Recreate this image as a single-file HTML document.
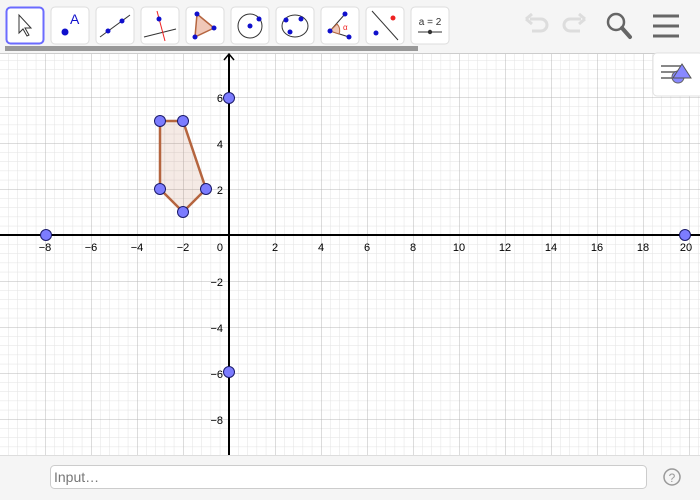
<!DOCTYPE html>
<html><head><style>
body{margin:0;width:700px;height:500px;overflow:hidden;background:#fff;font-family:"Liberation Sans",sans-serif;position:relative}
</style></head><body>
<svg width="700" height="500" style="position:absolute;left:0;top:0" font-family="Liberation Sans, sans-serif">
<defs>
<pattern id="mn" x="229" y="235" width="9.2" height="9.2" patternUnits="userSpaceOnUse"><path d="M0 0V9.2M0 0H9.2" stroke="#e2e2e2" stroke-width="1" fill="none"/></pattern>
<pattern id="mj" x="229" y="235" width="46" height="46" patternUnits="userSpaceOnUse"><path d="M0 0V46M0 0H46" stroke="#b8b8b8" stroke-width="1" fill="none"/></pattern>
</defs>
<rect x="0" y="0" width="700" height="53" fill="#f5f5f5"/>
<rect x="0" y="53" width="700" height="402" fill="url(#mn)"/>
<rect x="0" y="53" width="700" height="402" fill="url(#mj)"/>
<line x1="0" y1="53.5" x2="700" y2="53.5" stroke="#ccc"/>
<rect x="5" y="46" width="413" height="5" fill="#999"/>
<line x1="0" y1="235" x2="700" y2="235" stroke="#000" stroke-width="2"/>
<line x1="229" y1="54" x2="229" y2="455" stroke="#000" stroke-width="2"/>
<path d="M224 60L229 54L234 60" stroke="#000" fill="none" stroke-width="1.5"/>
<g font-size="11" fill="#000" text-anchor="middle">
<text x="45" y="251">−8</text><text x="91" y="251">−6</text><text x="137" y="251">−4</text><text x="183" y="251">−2</text>
<text x="275" y="251">2</text><text x="321" y="251">4</text><text x="367" y="251">6</text><text x="413" y="251">8</text>
<text x="459" y="251">10</text><text x="505" y="251">12</text><text x="551" y="251">14</text><text x="597" y="251">16</text><text x="643" y="251">18</text><text x="686" y="251">20</text>
</g>
<g font-size="11" fill="#000" text-anchor="end">
<text x="223" y="251">0</text>
<text x="223" y="102">6</text><text x="223" y="148">4</text><text x="223" y="194">2</text>
<text x="223" y="286">−2</text><text x="223" y="332">−4</text><text x="223" y="378">−6</text><text x="223" y="424">−8</text>
</g>
<polygon points="160,121 183,121 206,189 183,212 160,189" fill="rgba(153,51,0,0.1)" stroke="#b5653f" stroke-width="2.5" stroke-linejoin="round"/>
<g fill="#7c7cff" stroke="#1a1a6a" stroke-width="1">
<circle cx="160" cy="121" r="5.5"/><circle cx="183" cy="121" r="5.5"/><circle cx="206" cy="189" r="5.5"/><circle cx="183" cy="212" r="5.5"/><circle cx="160" cy="189" r="5.5"/>
<circle cx="229" cy="98" r="5.5"/><circle cx="46" cy="235" r="5.5"/><circle cx="685" cy="235" r="5.5"/><circle cx="229" cy="372" r="5.5"/>
</g>
<g fill="#fff" stroke="#ddd">
<rect x="51" y="7" width="38" height="37" rx="4"/><rect x="96" y="7" width="38" height="37" rx="4"/><rect x="141" y="7" width="38" height="37" rx="4"/><rect x="186" y="7" width="38" height="37" rx="4"/><rect x="231" y="7" width="38" height="37" rx="4"/><rect x="276" y="7" width="38" height="37" rx="4"/><rect x="321" y="7" width="38" height="37" rx="4"/><rect x="366" y="7" width="38" height="37" rx="4"/><rect x="411" y="7" width="38" height="37" rx="4"/>
</g>
<rect x="6.5" y="7.5" width="37" height="36" rx="4" fill="#fff" stroke="#6b6bff" stroke-width="2"/>
<path d="M19 15L19 33L23 29L27 36L29 35L25 28L31 28Z" fill="#fff" stroke="#333"/>
<circle cx="65" cy="32" r="3.5" fill="#1010cc"/><text x="70" y="24" font-size="14" fill="#1010cc">A</text>
<line x1="100" y1="37" x2="130" y2="15" stroke="#333"/><circle cx="108" cy="31" r="2.5" fill="#1010cc"/><circle cx="122" cy="21" r="2.5" fill="#1010cc"/>
<line x1="144" y1="37" x2="176" y2="29" stroke="#333"/><line x1="157" y1="11" x2="165" y2="41" stroke="#e22"/><circle cx="159" cy="19" r="2.5" fill="#1010cc"/>
<polygon points="197,14 214,28 195,37" fill="#f0c8b8" stroke="#b5653f" stroke-width="1.5"/><circle cx="197" cy="14" r="2.5" fill="#1010cc"/><circle cx="214" cy="28" r="2.5" fill="#1010cc"/><circle cx="195" cy="37" r="2.5" fill="#1010cc"/>
<circle cx="250" cy="26" r="12" fill="none" stroke="#333"/><circle cx="250" cy="26" r="2.5" fill="#1010cc"/><circle cx="259" cy="19" r="2.5" fill="#1010cc"/>
<ellipse cx="295" cy="26" rx="13" ry="11" fill="none" stroke="#333"/><circle cx="286" cy="20" r="2.5" fill="#1010cc"/><circle cx="301" cy="19" r="2.5" fill="#1010cc"/><circle cx="290" cy="32" r="2.5" fill="#1010cc"/>
<path d="M330 31L345 14M330 31L349 37" stroke="#333"/><path d="M330 31L337 24A9 9 0 0 1 339 34Z" fill="#f0c8b8" stroke="#b5653f"/><circle cx="330" cy="31" r="2.5" fill="#1010cc"/><circle cx="345" cy="14" r="2.5" fill="#1010cc"/><circle cx="349" cy="37" r="2.5" fill="#1010cc"/><text x="343" y="30" font-size="8" fill="#e22">α</text>
<line x1="372" y1="11" x2="398" y2="40" stroke="#333"/><circle cx="393" cy="18" r="2.5" fill="#e22"/><circle cx="376" cy="33" r="2.5" fill="#1010cc"/>
<text x="430" y="25" font-size="10" fill="#333" text-anchor="middle">a = 2</text><line x1="418" y1="32" x2="442" y2="32" stroke="#333"/><circle cx="430" cy="32" r="2.2" fill="#333"/>
<path d="M530 19H541A6 6 0 0 1 541 31H532M526 19L532 14M526 19L532 24" fill="none" stroke="#ddd" stroke-width="3"/>
<path d="M581 19H570A6 6 0 0 0 570 31H580M585 19L579 14M585 19L579 24" fill="none" stroke="#ddd" stroke-width="3"/>
<circle cx="616" cy="22" r="8" fill="none" stroke="#666" stroke-width="2.5"/><line x1="622" y1="28" x2="630" y2="37" stroke="#666" stroke-width="4" stroke-linecap="round"/>
<g stroke="#666" stroke-width="3"><line x1="653" y1="16" x2="679" y2="16"/><line x1="653" y1="26" x2="679" y2="26"/><line x1="653" y1="36" x2="679" y2="36"/></g>
<rect x="653" y="53" width="50" height="43" rx="4" fill="#fff" stroke="#e0e0e0"/>
<g stroke="#888" stroke-width="2"><line x1="661" y1="66" x2="681" y2="66"/><line x1="661" y1="72" x2="676" y2="72"/><line x1="661" y1="78" x2="674" y2="78"/></g>
<circle cx="678" cy="77" r="6" fill="#8888ff" stroke="#666"/><polygon points="682,64 691,78 673,78" fill="#8888ff" stroke="#555"/>
<rect x="0" y="455" width="700" height="45" fill="#f5f5f5"/>
<line x1="0" y1="455.5" x2="700" y2="455.5" stroke="#ddd"/>
<rect x="50.5" y="465.5" width="596" height="23" rx="4" fill="#fff" stroke="#ccc"/>
<text x="54" y="482" font-size="14" fill="#777">Input…</text>
<circle cx="672" cy="477" r="8" fill="none" stroke="#999" stroke-width="1.5"/><text x="672" y="482" font-size="12" fill="#999" text-anchor="middle">?</text>
</svg>
</body></html>
